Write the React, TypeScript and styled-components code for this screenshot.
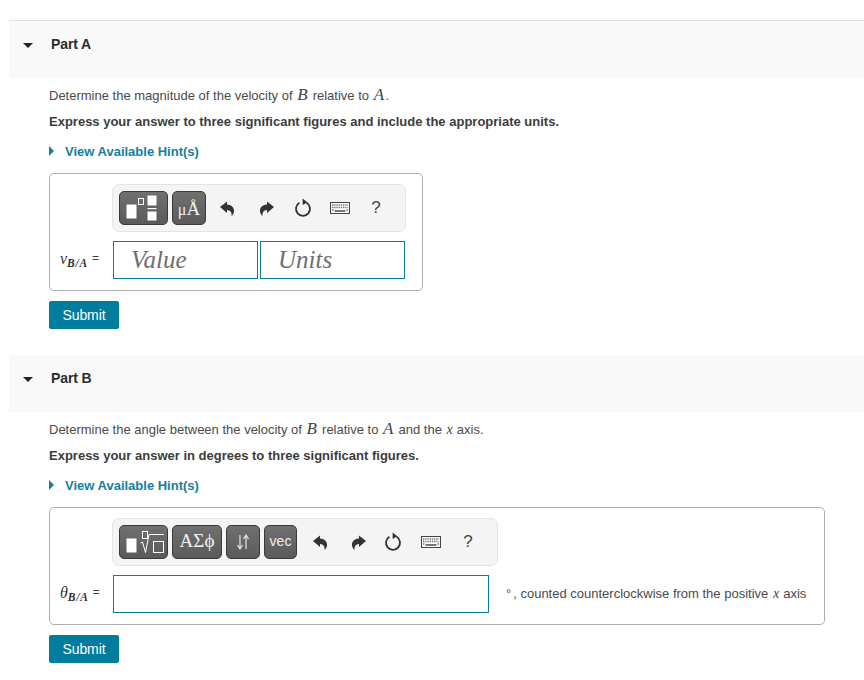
import React from "react";
import styled, { createGlobalStyle } from "styled-components";

const Global = createGlobalStyle`
  html, body { margin: 0; padding: 0; background: #fff; }
  body { font-family: "Liberation Sans", Arial, sans-serif; color: #3f3f3f; font-size: 13px; }
`;

const Page = styled.div`
  width: 864px;
  height: 680px;
  overflow: hidden;
  box-sizing: border-box;
  padding: 20px 0 0 9px;
`;
const Part = styled.section`
  margin-bottom: 26px;
`;
const PartHeader = styled.div<{ $first?: boolean }>`
  height: ${(p) => (p.$first ? 58 : 57)}px;
  box-sizing: border-box;
  background: #f9f9f9;
  border-top: ${(p) => (p.$first ? "1px solid #e0e0e0" : "none")};
  display: flex;
  align-items: flex-start;
  padding-top: 15px;
`;
const Caret = styled.span`
  width: 0;
  height: 0;
  margin: 7px 0 0 14px;
  border-left: 5px solid transparent;
  border-right: 5px solid transparent;
  border-top: 5px solid #222;
`;
const PartTitle = styled.h2`
  margin: 0 0 0 18px;
  font-size: 14px;
  line-height: 16px;
  font-weight: 700;
  color: #2d2d2d;
  letter-spacing: -0.1px;
`;
const PartBody = styled.div`
  padding: 9px 0 0 40px;
`;
const Question = styled.p`
  margin: 0;
  font-size: 13px;
  line-height: 18px;
  color: #4a4a4a;
`;
const Instruction = styled.p`
  margin: 8px 0 0;
  font-size: 13px;
  line-height: 18px;
  font-weight: 700;
  color: #3c3c3c;
`;
const HintRow = styled.div`
  margin-top: 11px;
  height: 18px;
  display: flex;
  align-items: center;
  gap: 11px;
  color: #14809f;
  font-size: 13px;
  font-weight: 700;
`;
const HintCaret = styled.span`
  width: 0;
  height: 0;
  border-top: 5px solid transparent;
  border-bottom: 5px solid transparent;
  border-left: 5px solid #14809f;
`;
const Var = styled.i`
  font-family: "Liberation Serif", "DejaVu Serif", serif;
  font-size: 17px;
  line-height: 0;
  font-style: italic;
  color: #444;
  letter-spacing: 1.5px;
  margin-left: 1px;
`;
const SmallVar = styled(Var)`
  font-size: 14px;
  letter-spacing: 0.5px;
`;
const AnswerBox = styled.div<{ $wide?: boolean }>`
  width: ${(p) => (p.$wide ? 776 : 374)}px;
  height: 118px;
  box-sizing: border-box;
  margin-top: 13px;
  padding: 10px 0 0 62px;
  border: 1px solid #adadad;
  border-radius: 5px;
`;
const Toolbar = styled.div<{ $w: number }>`
  width: ${(p) => p.$w}px;
  height: 48px;
  box-sizing: border-box;
  padding: 6px 0 0 6px;
  background: #f4f4f4;
  border: 1px solid #e4e4e4;
  border-radius: 7px;
  display: flex;
  align-items: flex-start;
`;
const ToolButton = styled.button<{ $w: number }>`
  width: ${(p) => p.$w}px;
  height: 34px;
  margin-right: 4px;
  padding: 0;
  border: 1px solid #3a3a3a;
  border-radius: 5px;
  background: linear-gradient(#707070, #5a5a5a);
  color: #f0f0f0;
  display: flex;
  align-items: center;
  justify-content: center;
  font-family: "Liberation Serif", serif;
  font-size: 19px;
`;
const VecText = styled.span`
  font-family: "Liberation Sans", sans-serif;
  font-size: 14px;
  margin-top: -3px;
`;
const Symbols = styled.span<{ $drop?: boolean }>`
  margin-top: ${(p) => (p.$drop ? 2 : -2)}px;
`;
const SmallMu = styled.span`
  font-size: 16px;
`;
const PlainTool = styled.span<{ $w: number; $first?: number }>`
  width: ${(p) => p.$w}px;
  height: 34px;
  margin-left: ${(p) => p.$first ?? 0}px;
  display: flex;
  align-items: center;
  justify-content: center;
  color: #333;
`;
const HelpMark = styled.span`
  font-size: 17px;
  color: #444;
`;
const InputRow = styled.div`
  display: flex;
  align-items: center;
  margin: 9px 0 0 -62px;
  height: 38px;
`;
const RowLabel = styled.div`
  width: 63px;
  box-sizing: border-box;
  padding: 0 0 2px 10px;
  white-space: nowrap;
  display: flex;
  align-items: baseline;
`;
const LabelVar = styled.i`
  font-family: "Liberation Serif", serif;
  font-size: 16px;
  color: #333;
`;
const Sub = styled.span`
  font-family: "Liberation Serif", serif;
  font-style: italic;
  font-weight: 700;
  font-size: 11.5px;
  letter-spacing: 0.8px;
  position: relative;
  top: 3px;
  color: #333;
`;
const Equals = styled.span`
  margin-left: 4px;
  font-size: 12px;
  position: relative;
  top: -2px;
`;
const Field = styled.div<{ $w: number }>`
  width: ${(p) => p.$w}px;
  height: 38px;
  box-sizing: border-box;
  margin-right: 2px;
  padding-left: 17px;
  border: 1px solid #0f7c9b;
  font-family: "Liberation Serif", serif;
  font-style: italic;
  font-size: 25px;
  line-height: 35px;
  color: #6f6f6f;
`;
const Suffix = styled.span`
  margin-left: 15px;
  padding-bottom: 2px;
  font-size: 13px;
  color: #4a4a4a;
  white-space: nowrap;
`;
const Degree = styled.span`
  margin-right: 2px;
`;
const Submit = styled.button`
  display: block;
  width: 70px;
  height: 28px;
  margin-top: 10px;
  padding: 0;
  border: none;
  border-radius: 2px;
  background: #007c9e;
  color: #fff;
  font-family: "Liberation Sans", sans-serif;
  font-size: 14px;
  letter-spacing: -0.1px;
`;

const UndoIcon = ({ flip }: { flip?: boolean }) => (
  <svg width="15" height="15" viewBox="0 0 15 15" style={flip ? { transform: "scaleX(-1)" } : undefined}>
    <path d="M0 6 L7 0.5 V3.5 C11 3.5 14.5 6.5 14 10.5 C13.8 12.5 12.5 14 11.5 15 C12 12 10.5 9 7 9 V12 Z" fill="#333" />
  </svg>
);

const ResetIcon = () => (
  <svg width="18" height="20" viewBox="0 0 18 20">
    <path d="M5.4 4.8 A7 7 0 1 0 12.6 4.8" fill="none" stroke="#333" strokeWidth="1.8" />
    <path d="M8.6 0.5 L13.4 4.2 L8.6 7 Z" fill="#333" />
  </svg>
);

const KeyboardIcon = () => (
  <svg width="20" height="12" viewBox="0 0 20 12">
    <rect x="0.5" y="0.5" width="19" height="11" fill="#fff" stroke="#444" />
    <path d="M2 3h16M2 5.5h16" stroke="#777" strokeWidth="1.4" strokeDasharray="1.4 0.8" />
    <path d="M2 8h1.5M16.5 8H18" stroke="#777" strokeWidth="1.4" />
    <path d="M4.5 9h11" stroke="#555" strokeWidth="1.6" />
  </svg>
);

const FractionIcon = () => (
  <svg width="36" height="27" viewBox="0 0 36 27">
    <rect x="0.5" y="9.5" width="10" height="14" fill="#fff" />
    <rect x="12.5" y="3.5" width="5" height="6" fill="none" stroke="#fff" />
    <rect x="21.5" y="0.5" width="9" height="10" fill="#fff" />
    <rect x="21.5" y="13" width="9" height="1.2" fill="#fff" />
    <rect x="21.5" y="16.5" width="9" height="9" fill="#fff" />
  </svg>
);

const RadicalIcon = () => (
  <svg width="44" height="27" viewBox="0 0 44 27">
    <rect x="4.5" y="9.5" width="10" height="14" fill="#fff" />
    <rect x="20.5" y="2.5" width="5" height="7" fill="none" stroke="#fff" />
    <path d="M18.5 14 L20.5 13 L23.5 23.5 L27 5.5 H42" fill="none" stroke="#fff" />
    <rect x="31.5" y="12.5" width="10" height="11" fill="none" stroke="#fff" />
  </svg>
);

const ArrowsIcon = () => (
  <svg width="14" height="16" viewBox="0 0 14 16">
    <path d="M4 1 V14 M1.5 11 L4 15 L6.5 11" fill="none" stroke="#e4e4e4" strokeWidth="1.2" />
    <path d="M10 15 V2 M7.5 5 L10 1 L12.5 5" fill="none" stroke="#e4e4e4" strokeWidth="1.2" />
  </svg>
);

type Tool = { w: number; ml: number };

const PlainTools = ({ tools }: { tools: Tool[] }) => (
  <>
    <PlainTool $w={tools[0].w} $first={tools[0].ml}><UndoIcon /></PlainTool>
    <PlainTool $w={tools[1].w} $first={tools[1].ml}><UndoIcon flip /></PlainTool>
    <PlainTool $w={tools[2].w} $first={tools[2].ml}><ResetIcon /></PlainTool>
    <PlainTool $w={tools[3].w} $first={tools[3].ml}><KeyboardIcon /></PlainTool>
    <PlainTool $w={tools[4].w} $first={tools[4].ml}><HelpMark>?</HelpMark></PlainTool>
  </>
);

export default function App() {
  return (
    <Page>
      <Global />
      <Part>
        <PartHeader $first>
          <Caret />
          <PartTitle>Part A</PartTitle>
        </PartHeader>
        <PartBody>
          <Question>
            Determine the magnitude of the velocity of <Var>B</Var> relative to <Var>A</Var>.
          </Question>
          <Instruction>Express your answer to three significant figures and include the appropriate units.</Instruction>
          <HintRow>
            <HintCaret />
            View Available Hint(s)
          </HintRow>
          <AnswerBox>
            <Toolbar $w={294}>
              <ToolButton $w={49}><FractionIcon /></ToolButton>
              <ToolButton $w={34}><Symbols $drop><SmallMu>μ</SmallMu>Å</Symbols></ToolButton>
              <PlainTools
                tools={[
                  { w: 24, ml: 5 },
                  { w: 24, ml: 15 },
                  { w: 24, ml: 13 },
                  { w: 24, ml: 13 },
                  { w: 24, ml: 12 },
                ]}
              />
            </Toolbar>
            <InputRow>
              <RowLabel>
                <LabelVar>v</LabelVar>
                <Sub>B/A</Sub>
                <Equals>=</Equals>
              </RowLabel>
              <Field $w={145}>Value</Field>
              <Field $w={145}>Units</Field>
            </InputRow>
          </AnswerBox>
          <Submit>Submit</Submit>
        </PartBody>
      </Part>
      <Part>
        <PartHeader>
          <Caret />
          <PartTitle>Part B</PartTitle>
        </PartHeader>
        <PartBody>
          <Question>
            Determine the angle between the velocity of <Var>B</Var> relative to <Var>A</Var> and the <SmallVar>x</SmallVar> axis.
          </Question>
          <Instruction>Express your answer in degrees to three significant figures.</Instruction>
          <HintRow>
            <HintCaret />
            View Available Hint(s)
          </HintRow>
          <AnswerBox $wide>
            <Toolbar $w={386}>
              <ToolButton $w={49}><RadicalIcon /></ToolButton>
              <ToolButton $w={50}><Symbols>ΑΣϕ</Symbols></ToolButton>
              <ToolButton $w={34}><ArrowsIcon /></ToolButton>
              <ToolButton $w={33}><VecText>vec</VecText></ToolButton>
              <PlainTools
                tools={[
                  { w: 24, ml: 7 },
                  { w: 24, ml: 14 },
                  { w: 24, ml: 11 },
                  { w: 24, ml: 14 },
                  { w: 24, ml: 13 },
                ]}
              />
            </Toolbar>
            <InputRow>
              <RowLabel>
                <LabelVar>θ</LabelVar>
                <Sub>B/A</Sub>
                <Equals>=</Equals>
              </RowLabel>
              <Field $w={376} />
              <Suffix>
                <Degree>°</Degree>, counted counterclockwise from the positive <SmallVar>x</SmallVar> axis
              </Suffix>
            </InputRow>
          </AnswerBox>
          <Submit>Submit</Submit>
        </PartBody>
      </Part>
    </Page>
  );
}
